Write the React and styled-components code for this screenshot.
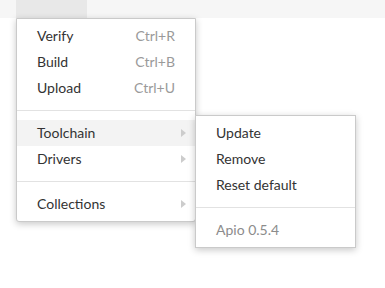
import styled, { createGlobalStyle } from "styled-components";

const GlobalStyle = createGlobalStyle`
  html, body {
    margin: 0;
    padding: 0;
    background: #ffffff;
    font-family: Lato, "Noto Sans", sans-serif;
  }
`;

const mainItems = [
  { label: "Verify", shortcut: "Ctrl+R" },
  { label: "Build", shortcut: "Ctrl+B" },
  { label: "Upload", shortcut: "Ctrl+U" },
];

const toolchainItems = ["Update", "Remove", "Reset default"];

const App = () => {
  return (
    <Page>
      <GlobalStyle />
      <TopBar>
        <Tab active />
        <Tab />
      </TopBar>

      <Menu>
        {mainItems.map((item) => (
          <Item key={item.label}>
            <span>{item.label}</span>
            <Shortcut>{item.shortcut}</Shortcut>
          </Item>
        ))}
        <Divider />
        <Item hover>
          <span>Toolchain</span>
          <Arrow />
          <SubMenu>
            {toolchainItems.map((label) => (
              <Item key={label}>
                <span>{label}</span>
              </Item>
            ))}
            <Divider />
            <Item muted>
              <span>Apio 0.5.4</span>
            </Item>
          </SubMenu>
        </Item>
        <Item>
          <span>Drivers</span>
          <Arrow />
        </Item>
        <Divider />
        <Item>
          <span>Collections</span>
          <Arrow />
        </Item>
      </Menu>
    </Page>
  );
};

export default App;

const Page = styled.div`
  position: relative;
  width: 385px;
  height: 288px;
  overflow: hidden;
`;

const TopBar = styled.div`
  display: flex;
  height: 18px;
  padding-left: 16px;
  background: #f6f6f6;
`;

const Tab = styled.div`
  width: 71px;
  height: 100%;
  background: ${(p) => (p.active ? "#e8e8e8" : "transparent")};
`;

const Menu = styled.div`
  position: absolute;
  top: 18px;
  left: 16px;
  width: 180px;
  box-sizing: border-box;
  padding: 4px 0;
  background: #ffffff;
  border: 1px solid #cacaca;
  border-radius: 0 0 3px 3px;
  box-shadow: 0 2px 7px rgba(0, 0, 0, 0.22);
`;

const SubMenu = styled(Menu)`
  top: -5px;
  left: 100%;
  width: 161px;
  border-radius: 0;
  z-index: 2;
`;

const Item = styled.div`
  position: relative;
  display: flex;
  align-items: center;
  justify-content: space-between;
  box-sizing: border-box;
  height: 26px;
  padding: 0 20px 2px;
  font-size: 14px;
  color: ${(p) => (p.muted ? "#8c8c8c" : "#333333")};
  background: ${(p) => (p.hover ? "#f3f3f3" : "transparent")};
  white-space: nowrap;
`;

const Shortcut = styled.span`
  color: #9a9a9a;
`;

const Arrow = styled.span`
  width: 0;
  height: 0;
  margin-right: -11px;
  margin-top: 2px;
  border-left: 5px solid #cccccc;
  border-top: 4px solid transparent;
  border-bottom: 4px solid transparent;
`;

const Divider = styled.div`
  height: 1px;
  margin: 9px 0;
  background: #e2e2e2;
`;
